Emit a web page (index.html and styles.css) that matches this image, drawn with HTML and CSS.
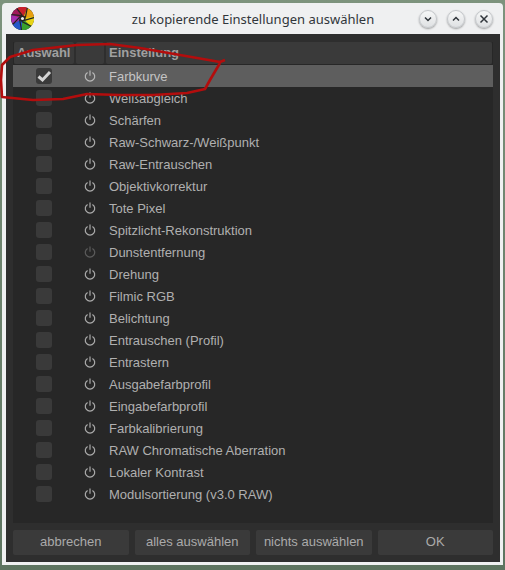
FILE: index.html
```html
<!DOCTYPE html>
<html lang="de">
  <head>
    <meta charset="utf-8">
    <title>zu kopierende Einstellungen auswählen</title>
    <link rel="stylesheet" href="styles.css">
  </head>
  <body>

    <section class="window">
      <header class="titlebar">
        <svg class="logo" viewBox="0 0 24 24">
          <circle cx="12" cy="12" r="12" fill="#222"/>
          <path d="M12 12 L6 1.5 A12 12 0 0 1 17 1 Z" fill="#c8202a"/>
          <path d="M12 12 L17 1 A12 12 0 0 1 24 11 Z" fill="#e8a010"/>
          <path d="M12 12 L24 10 A12 12 0 0 1 20 21 Z" fill="#e6d416"/>
          <path d="M12 12 L21 20 A12 12 0 0 1 10 24 Z" fill="#3aa02c"/>
          <path d="M12 12 L11 24 A12 12 0 0 1 1.5 18 Z" fill="#2458c8"/>
          <path d="M12 12 L2 18 A12 12 0 0 1 1 7 Z" fill="#a52fb0"/>
          <path d="M12 12 L0.5 8 A12 12 0 0 1 6 1.5 Z" fill="#a01a5a"/>
          <g stroke="#222" stroke-width="1.2">
            <path d="M12 9 L6 1.5 M15 11 L17 1 M14 14 L24 11 M11 15 L21 20 M9 13 L11 24 M9.5 10 L2 18 M12 9 L0.5 8"/>
          </g>
          <circle cx="12" cy="12" r="3.2" fill="#222"/>
          <circle cx="12" cy="12" r="1.6" fill="#eee"/>
        </svg>
        <h1>zu kopierende Einstellungen auswählen</h1>
        <div class="controls">
          <span class="control"><svg viewBox="0 0 10 10"><path d="M2 3.5 L5 6.5 L8 3.5"/></svg></span>
          <span class="control"><svg viewBox="0 0 10 10"><path d="M2 6.5 L5 3.5 L8 6.5"/></svg></span>
          <span class="control"><svg viewBox="0 0 10 10"><path d="M1.5 1.5 L8.5 8.5 M8.5 1.5 L1.5 8.5"/></svg></span>
        </div>
      </header>

      <main class="content">
        <div class="table">
          <div class="head">
            <span>Auswahl</span>
            <span></span>
            <span>Einstellung</span>
          </div>
          <div id="rows"></div>
        </div>

        <footer class="buttons">
          <button>abbrechen</button>
          <button>alles auswählen</button>
          <button>nichts auswählen</button>
          <button>OK</button>
        </footer>
      </main>
    </section>

    <svg class="scribble" viewBox="0 0 505 570">
      <path d="M225 60 L220 62 L180 55 L140 48 L110 44 L77 45 L33 50 L10 57 L2 65 L1 80 L2 97 L33 100 L63 99 L87 94 L120 95 L153 95 L187 93 L205 89 L210 80 L220 63"/>
    </svg>

    <script>
      const modules = [
        'Farbkurve', 'Weißabgleich', 'Schärfen', 'Raw-Schwarz-/Weißpunkt', 'Raw-Entrauschen',
        'Objektivkorrektur', 'Tote Pixel', 'Spitzlicht-Rekonstruktion', 'Dunstentfernung', 'Drehung',
        'Filmic RGB', 'Belichtung', 'Entrauschen (Profil)', 'Entrastern', 'Ausgabefarbprofil',
        'Eingabefarbprofil', 'Farbkalibrierung', 'RAW Chromatische Aberration', 'Lokaler Kontrast',
        'Modulsortierung (v3.0 RAW)'
      ]

      const power = '<svg class="power" viewBox="0 0 12 12"><path d="M3.6 2.4 A4.7 4.7 0 1 0 8.4 2.4 M6 0.6 L6 5.8"/></svg>'
      const check = '<svg viewBox="0 0 16 16"><path d="M2.5 8.5 L6.5 12 L14 4"/></svg>'

      const rows = document.querySelector('#rows')
      modules.forEach((name, i) => {
        const row = document.createElement('div')
        row.className = 'row'
        if (i === 0) row.classList.add('selected')
        if (name === 'Dunstentfernung') row.classList.add('off')
        row.innerHTML = `<span class="cell-check"><span class="box">${i === 0 ? check : ''}</span></span>
          <span class="cell-power">${power}</span>
          <span class="name">${name}</span>`
        rows.appendChild(row)
      })
    </script>

  </body>
</html>
```

FILE: styles.css
```css
* { box-sizing: border-box; }

body {
  margin: 0;
  width: 505px;
  height: 570px;
  overflow: hidden;
  padding: 3px 2px 5px 2px;
  background: linear-gradient(#7d937d, #6f8570 40%, #5d7460);
  font-family: 'Liberation Sans', sans-serif;
}

.window {
  height: 562px;
  display: flex;
  flex-direction: column;
  background-color: #eff0f1;
  border-radius: 4px 4px 0 0;
  padding: 0 3px 3px 4px;
}

.titlebar {
  flex: 0 0 31px;
  display: flex;
  align-items: center;
  padding: 0 7px 0 5px;
}

.logo {
  width: 23px;
  height: 23px;
}

h1 {
  flex: 1;
  margin: 0;
  font-family: 'Noto Sans', sans-serif;
  font-size: 13px;
  font-weight: 400;
  color: #31363b;
  text-align: center;
  padding-left: 53px;
}

.controls {
  display: flex;
  gap: 10px;
}

.control {
  width: 18px;
  height: 18px;
  border-radius: 50%;
  background: linear-gradient(#f6f7f7, #dfe1e3);
  border: 1px solid #c4c7ca;
  box-shadow: 0 1px 2px rgba(0,0,0,0.35);
  display: flex;
  align-items: center;
  justify-content: center;
}

.control svg {
  width: 10px;
  height: 10px;
  fill: none;
  stroke: #31363b;
  stroke-width: 1.5;
}

.content {
  flex: 1;
  display: flex;
  flex-direction: column;
  background-color: #2e2e2e;
  padding: 8px 7px 7px 7px;
}

.table {
  flex: 0 0 481px;
  background-color: #272727;
}

.head {
  display: grid;
  grid-template-columns: 60px 28px 1fr;
  column-gap: 2px;
  height: 22px;
  margin: 0 1px 1px;
  background-color: #2e2e2e;
  font-size: 13px;
  font-weight: 700;
  color: #a0a0a0;
  line-height: 21px;
}

.head span {
  background-color: #3a3a3a;
  border-radius: 2px;
  padding-left: 3px;
}

.row {
  display: grid;
  grid-template-columns: 62px 30px 1fr;
  height: 22px;
  align-items: center;
  font-size: 13px;
  color: #b0b0b0;
}

.row.selected {
  background-color: #5e5e5e;
  color: #c4c4c4;
}

.cell-check {
  display: flex;
  justify-content: center;
}

.box {
  width: 16px;
  height: 16px;
  border-radius: 3px;
  background-color: #3a3a3a;
}

.box svg {
  display: block;
  fill: none;
  stroke: #d4d4d4;
  stroke-width: 3;
}

.cell-power {
  display: flex;
  justify-content: center;
}

.power {
  width: 12px;
  height: 12px;
  fill: none;
  stroke: #aaa;
  stroke-width: 1.2;
}

.selected .power {
  stroke: #b8b8b8;
}

.off .power {
  stroke: #5c5c5c;
}

.name {
  padding-left: 4px;
}

.buttons {
  display: grid;
  grid-template-columns: repeat(4, 1fr);
  column-gap: 6px;
  margin-top: 7px;
}

button {
  height: 25px;
  padding: 0 0 2px;
  border: none;
  border-radius: 2px;
  background-color: #3a3a3a;
  color: #aaa;
  font-family: 'Liberation Sans', sans-serif;
  font-size: 13px;
}

.scribble {
  position: absolute;
  top: 0;
  left: 0;
  width: 505px;
  height: 570px;
  fill: none;
  stroke: #b30d0d;
  stroke-width: 2.6;
  stroke-linejoin: round;
  pointer-events: none;
}
```
